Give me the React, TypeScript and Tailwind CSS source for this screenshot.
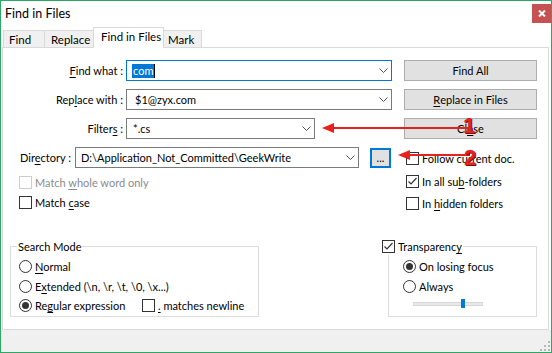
import React from "react";

const Chevron = () => (
  <svg width="9" height="5" viewBox="0 0 9 5" className="shrink-0">
    <polyline points="0.5,0.5 4.5,4.5 8.5,0.5" fill="none" stroke="#505050" strokeWidth="1" />
  </svg>
);

const Combo = ({ w, focused, children }: { w: string; focused?: boolean; children: React.ReactNode }) => (
  <div
    className={`${w} h-[21px] flex items-center justify-between bg-white border pl-[5px] pr-[3px] ${
      focused ? "border-[#0078d7]" : "border-[#7a7a7a]"
    }`}
  >
    <div className="flex items-center whitespace-nowrap overflow-hidden leading-[16px]">{children}</div>
    <Chevron />
  </div>
);

const Box = ({ checked, disabled }: { checked?: boolean; disabled?: boolean }) => (
  <div
    className={`w-[13px] h-[13px] shrink-0 border bg-white flex items-center justify-center ${
      disabled ? "border-[#cccccc]" : "border-[#333333]"
    }`}
  >
    {checked && (
      <svg width="11" height="11" viewBox="0 0 11 11">
        <polyline points="1.5,5.5 4,8 9.5,2" fill="none" stroke="#333" strokeWidth="1.2" />
      </svg>
    )}
  </div>
);

const Radio = ({ checked }: { checked?: boolean }) => (
  <div className="w-[13px] h-[13px] shrink-0 rounded-full border border-[#333333] bg-white flex items-center justify-center">
    {checked && <div className="w-[7px] h-[7px] rounded-full bg-[#333333]" />}
  </div>
);

const Check = ({ checked, disabled, children }: { checked?: boolean; disabled?: boolean; children: React.ReactNode }) => (
  <div className={`flex items-center h-[13px] gap-[3px] whitespace-nowrap ${disabled ? "text-[#8a8a8a]" : ""}`}>
    <Box checked={checked} disabled={disabled} />
    <span>{children}</span>
  </div>
);

const Option = ({ checked, children }: { checked?: boolean; children: React.ReactNode }) => (
  <div className="flex items-center h-[13px] gap-[3px] whitespace-nowrap">
    <Radio checked={checked} />
    <span>{children}</span>
  </div>
);

const Btn = ({ children }: { children: React.ReactNode }) => (
  <div className="w-[133px] h-[21px] bg-[#e1e1e1] border border-[#adadad] flex items-center justify-center">
    {children}
  </div>
);

const U = ({ children }: { children: React.ReactNode }) => <span className="underline underline-offset-2">{children}</span>;

export default function App() {
  return (
    <div className="w-[552px] h-[353px] bg-white border border-[#2aa865] flex flex-col relative text-[11px] text-black font-['Lato','Noto_Sans',sans-serif] leading-none whitespace-nowrap">
      {/* title bar */}
      <div className="h-[26px] flex justify-between shrink-0">
        <div className="pl-[4px] pt-[7px] text-[12.5px]">Find in Files</div>
        <div className="mt-[3px] w-[19px] h-[19px] bg-[#c75050] flex items-center justify-center">
          <svg width="8" height="7" viewBox="0 0 8 7">
            <path d="M1 0.5 L7 6.5 M7 0.5 L1 6.5" stroke="#fff" strokeWidth="2" />
          </svg>
        </div>
      </div>

      {/* tabs */}
      <div className="h-[20px] flex items-end pl-[2px] shrink-0 relative z-10 text-[11.5px]">
        <div className="w-[42px] h-[17px] bg-[#f0f0f0] border border-b-0 border-[#d9d9d9] pl-[5px] pt-[3px]">Find</div>
        <div className="-ml-px w-[50px] h-[17px] bg-[#f0f0f0] border border-b-0 border-[#d9d9d9] pl-[6px] pt-[3px]">Replace</div>
        <div className="-ml-px w-[71px] h-[21px] -mb-px bg-white border border-b-0 border-[#d9d9d9] pl-[7px] pt-[3px]">Find in Files</div>
        <div className="-ml-px w-[39px] h-[17px] bg-[#f0f0f0] border border-b-0 border-[#d9d9d9] pl-[4px] pt-[3px]">Mark</div>
      </div>

      {/* panel */}
      <div className="ml-[1px] w-[547px] h-[283px] border border-[#d9d9d9] bg-white shrink-0 flex flex-col">
        <div className="flex items-start pt-[12px]">
          {/* left column */}
          <div className="w-[401px] flex flex-col">
            <div className="flex items-center h-[21px]">
              <div className="w-[120px] text-right"><U>F</U>ind what :</div>
              <div className="ml-[3px]">
                <Combo w="w-[266px]" focused>
                  <span className="bg-[#0078d7] text-white px-[1px] h-[14px] flex items-center">com</span>
                  <span className="w-px h-[14px] bg-black" />
                </Combo>
              </div>
            </div>
            <div className="flex items-center h-[21px] mt-[8px]">
              <div className="w-[120px] text-right">Rep<U>l</U>ace with :</div>
              <div className="ml-[3px]">
                <Combo w="w-[266px]">
                  <span className="pl-[3px]">$1@zyx.com</span>
                </Combo>
              </div>
            </div>
            <div className="flex items-center h-[21px] mt-[8px]">
              <div className="w-[120px] text-right">Filter<U>s</U> :</div>
              <div className="ml-[3px]">
                <Combo w="w-[189px]">
                  <span className="pl-[1px]">*.cs</span>
                </Combo>
              </div>
            </div>
            <div className="flex items-center h-[21px] mt-[8px] pl-[17px]">
              <div className="w-[55px]">Dir<U>e</U>ctory :</div>
              <Combo w="w-[284px]">
                <span>D:\Application_Not_Committed\GeekWrite</span>
              </Combo>
              <div className="ml-[11px] w-[21px] h-[20px] border-2 border-[#0078d7] bg-[#e1e1e1] flex items-center justify-center">...</div>
            </div>
            <div className="flex flex-col pl-[16px] mt-[8px] gap-[7px]">
              <Check disabled>Match <U>w</U>hole word only</Check>
              <Check>Match <U>c</U>ase</Check>
            </div>
          </div>

          {/* right column */}
          <div className="flex flex-col">
            <div className="flex flex-col gap-[8px]">
              <Btn>Find All</Btn>
              <Btn><U>R</U>eplace in Files</Btn>
              <Btn>Cl<U>o</U>se</Btn>
            </div>
            <div className="flex flex-col pl-[2px] mt-[13px]">
              <Check>Follow current doc.</Check>
              <div className="mt-[10px]"><Check checked>In all su<U>b</U>-folders</Check></div>
              <div className="mt-[9px]"><Check>In <U>h</U>idden folders</Check></div>
            </div>
          </div>
        </div>

        {/* group boxes */}
        <div className="flex mt-[36px]">
          <div className="ml-[7px] w-[249px] h-[71px] border border-[#dcdcdc] relative pl-[8px] pt-[13px] flex flex-col gap-[7px]">
            <div className="absolute left-[6px] -top-[8px] bg-white px-[1px] h-[15px] flex items-center">Search Mode</div>
            <Option><U>N</U>ormal</Option>
            <Option>E<U>x</U>tended (\n, \r, \t, \0, \x...)</Option>
            <div className="flex items-center -mt-px">
              <div className="w-[123px]"><Option checked>Re<U>g</U>ular expression</Option></div>
              <Check><U>.</U> matches newline</Check>
            </div>
          </div>
          <div className="ml-[129px] w-[149px] h-[71px] border border-[#dcdcdc] relative pl-[14px] pt-[13px] flex flex-col gap-[7px]">
            <div className="absolute -left-[7px] -top-[7px] bg-white pr-[1px] pb-[2px]">
              <Check checked>Transparenc<U>y</U></Check>
            </div>
            <Option checked>On losing focus</Option>
            <Option>Always</Option>
            <div className="relative ml-[10px] mt-[2px] w-[70px] h-[4px] bg-[#e7eaea] border border-[#d6d6d6]">
              <div className="absolute left-[47px] -top-[4px] w-[4px] h-[9px] bg-[#0078d7]" />
            </div>
          </div>
        </div>
      </div>

      {/* status strip */}
      <div className="flex-1 bg-[#f0f0f0] relative">
        <svg width="10" height="10" viewBox="0 0 10 10" className="absolute right-[1px] bottom-[1px]">
          <g fill="#b8b8b8">
            <rect x="8" y="0" width="2" height="2" />
            <rect x="4" y="4" width="2" height="2" />
            <rect x="8" y="4" width="2" height="2" />
            <rect x="0" y="8" width="2" height="2" />
            <rect x="4" y="8" width="2" height="2" />
            <rect x="8" y="8" width="2" height="2" />
          </g>
        </svg>
      </div>

      {/* annotation arrows */}
      <svg width="552" height="353" className="absolute left-[-1px] top-[-1px] pointer-events-none">
        <g fill="#e8201e" stroke="none">
          <rect x="332" y="127" width="140" height="2" />
          <polygon points="322,128 334,123 334,133" />
          <rect x="408" y="154" width="62" height="2" />
          <polygon points="398,155 410,150 410,160" />
        </g>
      </svg>
      <div className="absolute left-[462px] top-[114px] text-[22px] font-bold text-[#e8201e] font-['Liberation_Sans',sans-serif] [text-shadow:1px_1px_0_#7a1010]">1</div>
      <div className="absolute left-[463px] top-[146px] text-[22px] font-bold text-[#e8201e] font-['Liberation_Sans',sans-serif] [text-shadow:1px_1px_0_#7a1010]">2</div>
    </div>
  );
}
